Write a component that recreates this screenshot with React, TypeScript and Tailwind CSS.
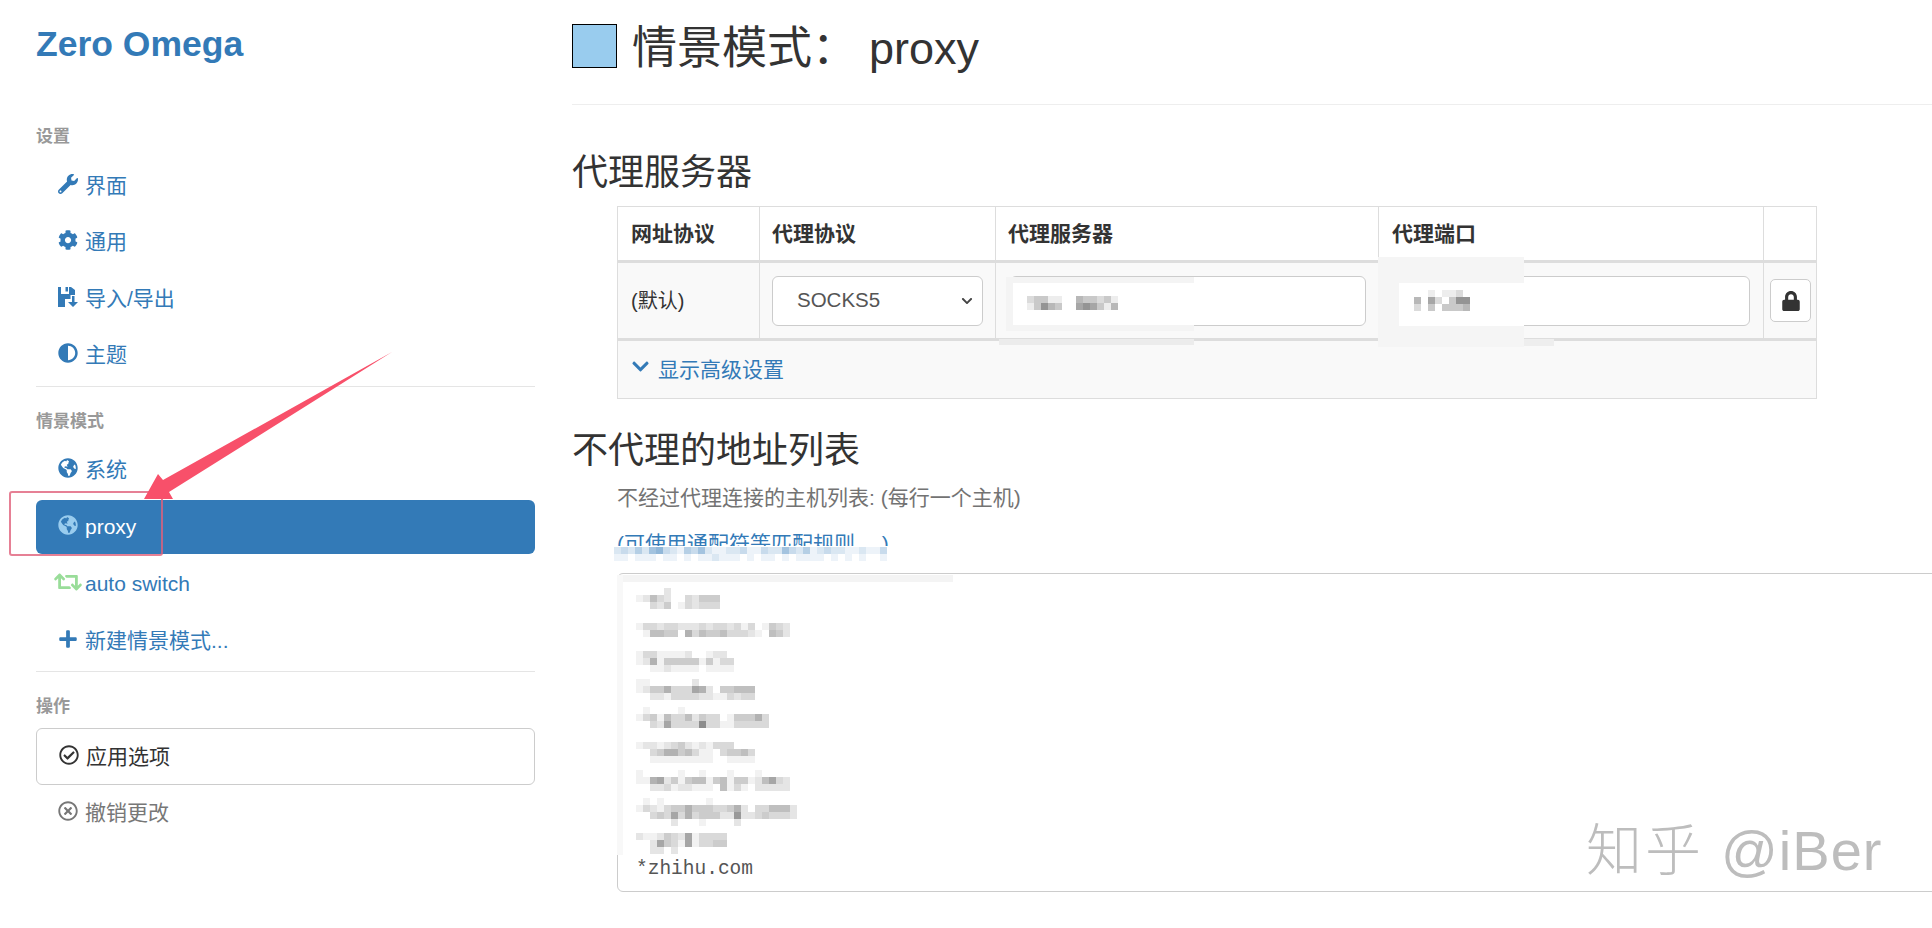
import React from 'react'
import {
  FaWrench,
  FaCog,
  FaAdjust,
  FaGlobeAmericas,
  FaRetweet,
  FaPlus,
  FaRegCheckCircle,
  FaRegTimesCircle,
  FaChevronDown,
  FaLock,
} from 'react-icons/fa'

const sans = "font-['Liberation_Sans','Noto_Sans_CJK_SC',sans-serif]"

// digit = how dark the cell of the blurred patch is
const Mosaic = ({ rows, cell = 7, color = '#000', unit = 0.05 }: { rows: string[]; cell?: number; color?: string; unit?: number }) => {
  const cols = Math.max(...rows.map((r) => r.length))
  return (
    <svg width={cols * cell} height={rows.length * cell} className="block" shapeRendering="crispEdges">
      {rows.map((row, y) =>
        row.split('').map((d, x) =>
          d === '0' ? null : <rect key={`${x}-${y}`} x={x * cell} y={y * cell} width={cell} height={cell} fill={color} fillOpacity={Number(d) * unit} />
        )
      )}
    </svg>
  )
}

const hostRows = [
  '00002',
  '125320032444',
  '003240132333',
  '',
  '',
  '1332332223233231301432',
  '0155440635445333210542',
  '',
  '',
  '1331111200122',
  '126144444141330',
  '001121111011110',
  '',
  '1100000020',
  '12446333762044555',
  '00221333322113233',
  '',
  '01000010',
  '1341533524330144463',
  '0032733339331133333',
  '',
  '',
  '12212342121333',
  '00346645311034453',
  '00111111111001111',
  '',
  '1000001001000100010',
  '1167241455145144125732',
  '0022312211105131022222',
  '',
  '0101000000100000',
  '13213446444334620335552',
  '00343736344422822343332',
  '00000200010000200',
  '',
  '2112432713333',
  '0027431713344',
  '00220200',
]

const NavItem = ({ icon, children, active, muted }: { icon: React.ReactNode; children: React.ReactNode; active?: boolean; muted?: boolean }) => (
  <div
    className={
      'flex items-center rounded-[6px] pl-[22px] text-[21px] ' +
      (active ? 'mt-px h-[54px] bg-[#337ab7] font-medium text-white' : muted ? 'h-[55px] text-[#777777]' : 'h-[55px] text-[#337ab7]')
    }
  >
    <span className="mr-[7px] flex w-[20px] shrink-0 -translate-y-[2px] justify-center">{icon}</span>
    {children}
  </div>
)

const SectionLabel = ({ children, className }: { children: React.ReactNode; className?: string }) => (
  <div className={'h-[24px] text-[17px] font-bold leading-[24px] text-[#999999] ' + (className ?? '')}>{children}</div>
)

const FloppySave = () => (
  <svg width="20" height="20" viewBox="0 0 20 20" fill="#337ab7">
    <path fillRule="evenodd" d="M0 0h3v7h8V0h2l4 3v5h-4.500v4H7v8H0zM7.500 0h2.500v4.500H7.500z" />
    <path d="M14 9h2.500v6H20l-5 5-5-5h4z" />
  </svg>
)

const Sidebar = () => (
  <div className="ml-[36px] w-[499px] shrink-0">
    <div className="mt-[22px] text-[35.5px] font-bold leading-[44px] text-[#337ab7]">Zero Omega</div>
    <SectionLabel className="mt-[59px]">设置</SectionLabel>
    <div className="mt-[9px] flex flex-col gap-[1.5px]">
      <NavItem icon={<FaWrench size={20} />}>界面</NavItem>
      <NavItem icon={<FaCog size={20} />}>通用</NavItem>
      <NavItem icon={<FloppySave />}>导入/导出</NavItem>
      <NavItem icon={<FaAdjust size={20} />}>主题</NavItem>
    </div>
    <div className="mt-[3.5px] h-px bg-[#e5e5e5]" />
    <SectionLabel className="mt-[23px]">情景模式</SectionLabel>
    <div className="mt-[8px] flex flex-col gap-[2px]">
      <NavItem icon={<FaGlobeAmericas size={20} />}>系统</NavItem>
      <NavItem active icon={<FaGlobeAmericas size={20} className="text-[#99ccee]" />}>proxy</NavItem>
      <NavItem icon={<FaRetweet size={28} className="-mx-1 shrink-0 text-[#99dd99]" />}>auto switch</NavItem>
      <NavItem icon={<FaPlus size={20} />}>新建情景模式...</NavItem>
    </div>
    <div className="mt-[3px] h-px bg-[#e5e5e5]" />
    <SectionLabel className="mt-[23px]">操作</SectionLabel>
    <div className="mt-[9px] flex h-[57px] items-center rounded-[6px] border border-[#cccccc] pl-[22px] text-[21px] text-[#333333]">
      <FaRegCheckCircle size={20} className="mr-[7px] -translate-y-[2px]" />
      应用选项
    </div>
    <NavItem muted icon={<FaRegTimesCircle size={20} />}>撤销更改</NavItem>
  </div>
)

const inputClass = 'h-[50px] rounded-[6px] border border-[#cccccc] bg-white'

const ProxyTable = () => (
  <table className="ml-[45px] w-[1199px] table-fixed border-collapse border border-[#dddddd] text-[21px] text-[#333333]">
    <colgroup>
      <col className="w-[142px]" />
      <col className="w-[236px]" />
      <col className="w-[383px]" />
      <col className="w-[385px]" />
      <col className="w-[53px]" />
    </colgroup>
    <thead>
      <tr className="h-[55px] border-b-[3px] border-[#dddddd] text-left">
        <th className="border-r border-[#dddddd] pl-[13px] font-bold">网址协议</th>
        <th className="border-r border-[#dddddd] pl-[12px] font-bold">代理协议</th>
        <th className="border-r border-[#dddddd] pl-[12px] font-bold">代理服务器</th>
        <th className="border-r border-[#dddddd] pl-[13px] font-bold">代理端口</th>
        <th />
      </tr>
    </thead>
    <tbody>
      <tr className="h-[78px] border-b-[3px] border-[#dddddd] bg-[#f9f9f9]">
        <td className="border-r border-[#dddddd] pl-[13px] text-[20px]">(默认)</td>
        <td className="border-r border-[#dddddd] pl-[12px]">
          <div className={inputClass + ' flex w-[211px] items-center justify-between pl-[24px] pr-[9px] font-["Liberation_Sans"] text-[20.500px] text-[#555555]'}>
            SOCKS5
            <FaChevronDown size={12} className="text-[#444444]" />
          </div>
        </td>
        <td className="border-r border-[#dddddd] pl-[14px]">
          <div className={inputClass + ' w-[356px]'} />
        </td>
        <td className="border-r border-[#dddddd] pl-[14px]">
          <div className={inputClass + ' w-[357px]'} />
        </td>
        <td className="pl-[6px]">
          <div className="flex h-[43px] w-[41px] items-center justify-center rounded-[5px] border border-[#cccccc] bg-white">
            <FaLock size={20} className="text-[#333333]" />
          </div>
        </td>
      </tr>
      <tr className="h-[59px] bg-[#f9f9f9]">
        <td colSpan={5} className="pl-[13px] text-[21px] text-[#337ab7]">
          <span className="flex items-center gap-[8px]">
            <FaChevronDown size={19} className="-translate-y-[3px]" />
            显示高级设置
          </span>
        </td>
      </tr>
    </tbody>
  </table>
)

const HostList = () => (
  <div className="ml-[45px] mt-[14px] h-[319px] w-[1400px] rounded-[6px] border border-[#cccccc] pl-[18px] pt-[14px] font-['Liberation_Mono',monospace] text-[19.500px] leading-[30px] text-[#555555]">
    <Mosaic rows={hostRows} />
    *zhihu.com
  </div>
)

const Main = () => (
  <div className="ml-[37px] flex-1">
    <div className="flex h-[105px] items-start border-b border-[#eeeeee] pt-[24px]">
      <div className="h-[44px] w-[45px] shrink-0 border border-black bg-[#99ccee]" />
      <h1 className="ml-[15px] text-[45px] leading-[50px] text-[#333333]">
        情景模式：<span className="ml-[12px]">proxy</span>
      </h1>
    </div>
    <h3 className="mt-[43px] text-[36px] leading-[50px] text-[#333333]">代理服务器</h3>
    <div className="mt-[8px]">
      <ProxyTable />
    </div>
    <h3 className="mt-[27px] text-[36px] leading-[50px] text-[#333333]">不代理的地址列表</h3>
    <p className="ml-[45px] mt-[7px] text-[21px] leading-[30px] text-[#737373]">不经过代理连接的主机列表: (每行一个主机)</p>
    <p className="ml-[45px] mt-[16px] h-[30px] text-[21px] leading-[30px] text-[#337ab7]">(可使用通配符等匹配规则 …)</p>
    <HostList />
  </div>
)

const App = () => (
  <div className={'relative flex h-[928px] w-[1932px] overflow-hidden bg-white ' + sans}>
    <Sidebar />
    <Main />

    {/* blurred patches */}
    <div className="absolute left-[1006px] top-[277px] h-[54px] w-[188px] bg-[#f4f4f4]" />
    <div className="absolute left-[1013px] top-[283px] h-[42px] w-[181px] bg-white" />
    <div className="absolute left-[1027px] top-[296px]">
      <Mosaic unit={0.07} rows={['2331100433231', '1364300565314']} />
    </div>
    <div className="absolute left-[999px] top-[339px] h-[6px] w-[195px] bg-[#ececec]" />
    <div className="absolute left-[1378px] top-[257px] h-[90px] w-[146px] bg-[#f5f5f5]" />
    <div className="absolute left-[1399px] top-[283px] h-[43px] w-[125px] bg-white" />
    <div className="absolute left-[1414px] top-[290px]">
      <Mosaic unit={0.07} rows={['00101120', '40520366', '20303334']} />
    </div>
    <div className="absolute left-[1524px] top-[339px] h-[7px] w-[30px] bg-[#eeeeee]" />
    <div className="absolute left-[612px] top-[546px] h-[16px] w-[280px] bg-white" />
    <div className="absolute left-[614px] top-[547px]">
      <Mosaic color="#337ab7" unit={0.09} rows={['232425632143521122311322532412322112113', '110111011010112111010110101111010101001']} />
    </div>
    <div className="absolute left-[618px] top-[575px] h-[7px] w-[335px] bg-[#f4f4f4]" />
    <div className="absolute left-[617px] top-[575px] h-[280px] w-[6px] bg-[#f8f8f8]" />

    {/* annotation */}
    <div className="absolute left-[9px] top-[491px] h-[65px] w-[154px] rounded-[3px] border-2 border-[#e0607a]/80" />
    <svg className="absolute left-0 top-0" width="400" height="510">
      <polygon points="392,352 163,480 158,474 144,499 173,499 169,492" fill="#f8506a" />
    </svg>

    {/* watermark */}
    <div className="absolute left-[1586px] top-[818px] flex items-center text-[56px] font-light leading-[66px] tracking-[3px] text-[#bdbdbd]">
      <span>知乎</span>
      <span className="ml-[17px] tracking-[1px]">@iBer</span>
    </div>
  </div>
)

export default App
